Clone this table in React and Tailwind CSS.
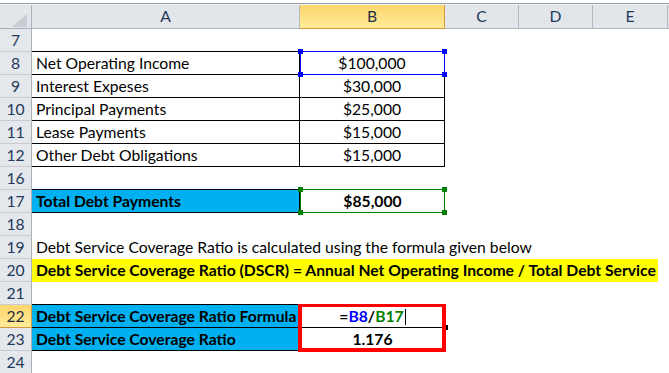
import React from "react";

const FONT = "font-['Lato','Liberation_Sans',Arial,sans-serif]";

function RowHdr({ n, active }) {
  return (
    <div
      className={
        "w-[32px] shrink-0 h-full border-r border-b text-center text-[15.7px] leading-[22px] " +
        (active
          ? "bg-gradient-to-b from-[#fcd66a] to-[#ffeb98] border-r-[#d29a3a] border-b-[#d29a3a] text-[#1e2f45]"
          : "bg-[#e4e7eb] border-r-[#a9b0b8] border-b-[#c7ccd2] text-[#23395a]")
      }
    >
      {n}
    </div>
  );
}

function Row({ n, active, children }) {
  return (
    <div className="flex h-[23px] items-stretch">
      <RowHdr n={n} active={active} />
      {children}
    </div>
  );
}

function A({ children, cls = "" }) {
  return (
    <div className={"w-[268px] shrink-0 h-full pl-[4px] text-[15.7px] leading-[22px] whitespace-nowrap " + cls}>
      {children}
    </div>
  );
}

function B({ children, cls = "" }) {
  return (
    <div className={"w-[145px] shrink-0 h-full text-center text-[15.7px] leading-[22px] whitespace-nowrap " + cls}>
      {children}
    </div>
  );
}

function Handles({ color }) {
  const c = "absolute w-[5px] h-[5px] " + color;
  return (
    <>
      <div className={c + " -left-[3px] -top-[3px]"} />
      <div className={c + " -right-[3px] -top-[3px]"} />
      <div className={c + " -left-[3px] -bottom-[3px]"} />
      <div className={c + " -right-[3px] -bottom-[3px]"} />
    </>
  );
}

export default function App() {
  return (
    <div className={"relative w-[669px] h-[373px] overflow-hidden bg-white text-black " + FONT}>
      {/* top strip */}
      <div className="h-[3px] bg-white" />
      <div className="h-px bg-[#9aa0a8]" />
      <div className="h-px bg-[#eef0f2]" />
      {/* column headers */}
      <div className="flex h-[24px] text-[15.7px] leading-[23px] text-[#23395a]">
        <div className="relative w-[32px] shrink-0 bg-[#e2e5e9] border-r border-b border-[#a9b0b8]">
          <svg className="absolute left-[12px] top-[9px]" width="15" height="13" viewBox="0 0 15 13">
            <polygon points="15,0 15,13 0,13" fill="#c9cdd3" />
          </svg>
        </div>
        <div className="w-[268px] shrink-0 bg-[#e2e5e9] border-r border-b border-[#b3b9c0] text-center">A</div>
        <div className="w-[145px] shrink-0 bg-gradient-to-b from-[#fcd66a] to-[#ffeb98] border-r border-b border-[#d29a3a] text-center text-[#1e2f45]">B</div>
        <div className="w-[74px] shrink-0 bg-[#e2e5e9] border-r border-b border-[#b3b9c0] text-center">C</div>
        <div className="w-[74px] shrink-0 bg-[#e2e5e9] border-r border-b border-[#b3b9c0] text-center">D</div>
        <div className="w-[75px] shrink-0 bg-[#e2e5e9] border-r border-b border-[#b3b9c0] text-center">E</div>
        <div className="flex-1 bg-[#e2e5e9] border-b border-[#b3b9c0]" />
      </div>

      <Row n="7">
        <A cls="border-b border-black" />
        <B cls="border-b border-black" />
      </Row>
      <Row n="8">
        <A cls="border-b border-r border-black">Net Operating Income</A>
        <B cls="border-b border-r border-black">$100,000</B>
      </Row>
      <Row n="9">
        <A cls="border-b border-r border-black">Interest Expeses</A>
        <B cls="border-b border-r border-black">$30,000</B>
      </Row>
      <Row n="10">
        <A cls="border-b border-r border-black">Principal Payments</A>
        <B cls="border-b border-r border-black">$25,000</B>
      </Row>
      <Row n="11">
        <A cls="border-b border-r border-black">Lease Payments</A>
        <B cls="border-b border-r border-black">$15,000</B>
      </Row>
      <Row n="12">
        <A cls="border-b border-r border-black">Other Debt Obligations</A>
        <B cls="border-b border-r border-black">$15,000</B>
      </Row>
      <Row n="16">
        <A cls="border-b border-black" />
      </Row>
      <Row n="17">
        <A cls="border-b border-r border-black bg-[#00b0f0] font-bold">Total Debt Payments</A>
        <B cls="font-bold">$85,000</B>
      </Row>
      <Row n="18" />
      <Row n="19">
        <div className="pl-[4px] text-[15.7px] leading-[22px] whitespace-nowrap">
          Debt Service Coverage Ratio is calculated using the formula given below
        </div>
      </Row>
      <Row n="20">
        <div className="w-[626px] shrink-0 h-full bg-[#ffff00] pl-[4px] text-[15.7px] leading-[22px] whitespace-nowrap font-bold">
          Debt Service Coverage Ratio (DSCR) = Annual Net Operating Income / Total Debt Service
        </div>
      </Row>
      <Row n="21">
        <A cls="border-b border-black" />
        <B cls="border-b border-black" />
      </Row>
      <Row n="22" active>
        <A cls="border-b border-r border-black bg-[#00b0f0] font-bold">Debt Service Coverage Ratio Formula</A>
        <B cls="border-b border-black font-bold">
          =<span className="text-[#0000ff]">B8</span>/<span className="text-[#008000]">B17</span>
          <span className="inline-block w-px h-[16px] bg-black align-[-3px] ml-[1px]" />
        </B>
      </Row>
      <Row n="23">
        <A cls="border-b border-r border-black bg-[#00b0f0] font-bold">Debt Service Coverage Ratio</A>
        <B cls="border-b border-black font-bold">1.176</B>
      </Row>
      <Row n="24" />

      {/* selection overlays */}
      <div className="absolute left-[300px] top-[51px] w-[145px] h-[24px] border border-[#0000ff]">
        <Handles color="bg-[#0000ff]" />
      </div>
      <div className="absolute left-[300px] top-[189px] w-[145px] h-[24px] border border-[#008000]">
        <Handles color="bg-[#008000]" />
      </div>
      <div className="absolute left-[298px] top-[304px] w-[148px] h-[48px] border-[#ff0000] border-t-[3px] border-l-[4px] border-r-[4px] border-b-[4px]" />
      <div className="absolute left-[446px] top-[325px] w-[2px] h-[5px] bg-black" />
    </div>
  );
}
